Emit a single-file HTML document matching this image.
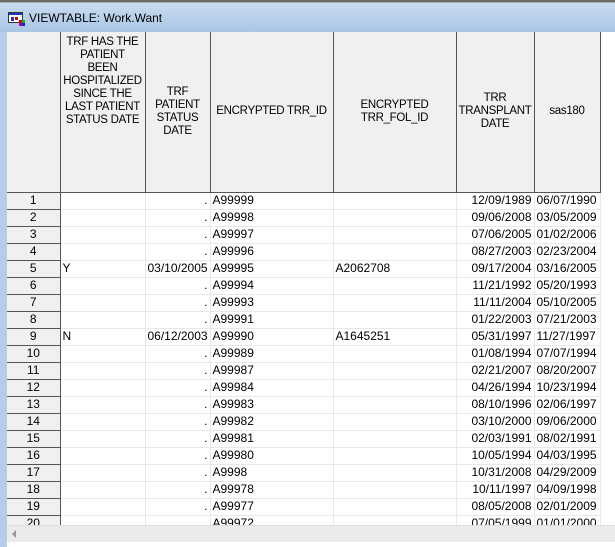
<!DOCTYPE html>
<html><head><meta charset="utf-8"><style>
*{margin:0;padding:0;box-sizing:border-box}
body{width:615px;height:547px;overflow:hidden;background:#fff;font-family:"Liberation Sans",Arial,sans-serif;font-size:12px;color:#000;position:relative}
#top{position:absolute;left:0;top:0;width:615px;height:3px;background:#6b6b6b;border-bottom:1px solid #aaa}
#title{position:absolute;left:0;top:3px;width:615px;height:29px;background:linear-gradient(#c9dbef,#aac6e6)}
#title span{position:absolute;left:29px;top:8px;font-size:12px}
#lb{position:absolute;left:0;top:32px;width:7px;height:515px;background:#b5cde9}
#grid{position:absolute;left:7px;top:32px;width:608px;height:493px;overflow:hidden;background:#fff}
table{border-collapse:collapse;table-layout:fixed;width:593px}
th{background:#f0f0f0;font-weight:normal;border-right:1px solid #555;border-bottom:1px solid #555;height:160px;vertical-align:middle;text-align:center;line-height:13px;padding:0 1px;white-space:nowrap;font-size:11.5px;letter-spacing:-0.3px}
td{height:17px;border-right:1px solid #e8e8e8;border-bottom:1px solid #e8e8e8;padding:0 2px;white-space:nowrap;overflow:hidden;line-height:15px}
td.n{background:#f0f0f0;border-right:1px solid #555;border-bottom:1px solid #555;text-align:center}
td.r{text-align:right}
#sb{position:absolute;left:7px;top:525px;width:608px;height:17px;background:#ebebeb;border-top:1px solid #ddd}
#sb i{position:absolute;left:5px;top:4px;width:0;height:0;border-top:4px solid transparent;border-bottom:4px solid transparent;border-right:4px solid #999}
</style></head><body>
<div id="top"></div>
<div id="title">
<svg viewBox="0 0 18 15" style="position:absolute;left:8px;top:9px;width:18px;height:15px"><rect x="0.5" y="0.5" width="14" height="10" fill="#fff" stroke="#333"/><rect x="1" y="1" width="13" height="2" fill="#1a3fb0"/><rect x="3" y="5" width="3" height="4" fill="#1a3fb0"/><rect x="7" y="5" width="3" height="3" fill="#c00"/><rect x="11" y="8" width="3" height="3" fill="#c00"/><rect x="14" y="8" width="3" height="3" fill="#2a2"/><rect x="11" y="11" width="3" height="3" fill="#a0a"/><rect x="14" y="11" width="3" height="3" fill="#22c"/></svg>
<span>VIEWTABLE: Work.Want</span></div>
<div id="lb"></div>
<div id="grid"><table>
<colgroup><col style="width:53px"><col style="width:85px"><col style="width:65px"><col style="width:123px"><col style="width:123px"><col style="width:78px"><col style="width:66px"></colgroup>
<tr><th></th><th style="vertical-align:top;padding-top:4px">TRF HAS THE<br>PATIENT<br>BEEN<br>HOSPITALIZED<br>SINCE THE<br>LAST PATIENT<br>STATUS DATE</th><th>TRF<br>PATIENT<br>STATUS<br>DATE</th><th>ENCRYPTED TRR_ID</th><th>ENCRYPTED<br>TRR_FOL_ID</th><th>TRR<br>TRANSPLANT<br>DATE</th><th>sas180</th></tr>
<tr><td class="n">1</td><td></td><td class="r">.</td><td>A99999</td><td></td><td class="r">12/09/1989</td><td>06/07/1990</td></tr>
<tr><td class="n">2</td><td></td><td class="r">.</td><td>A99998</td><td></td><td class="r">09/06/2008</td><td>03/05/2009</td></tr>
<tr><td class="n">3</td><td></td><td class="r">.</td><td>A99997</td><td></td><td class="r">07/06/2005</td><td>01/02/2006</td></tr>
<tr><td class="n">4</td><td></td><td class="r">.</td><td>A99996</td><td></td><td class="r">08/27/2003</td><td>02/23/2004</td></tr>
<tr><td class="n">5</td><td>Y</td><td class="r">03/10/2005</td><td>A99995</td><td>A2062708</td><td class="r">09/17/2004</td><td>03/16/2005</td></tr>
<tr><td class="n">6</td><td></td><td class="r">.</td><td>A99994</td><td></td><td class="r">11/21/1992</td><td>05/20/1993</td></tr>
<tr><td class="n">7</td><td></td><td class="r">.</td><td>A99993</td><td></td><td class="r">11/11/2004</td><td>05/10/2005</td></tr>
<tr><td class="n">8</td><td></td><td class="r">.</td><td>A99991</td><td></td><td class="r">01/22/2003</td><td>07/21/2003</td></tr>
<tr><td class="n">9</td><td>N</td><td class="r">06/12/2003</td><td>A99990</td><td>A1645251</td><td class="r">05/31/1997</td><td>11/27/1997</td></tr>
<tr><td class="n">10</td><td></td><td class="r">.</td><td>A99989</td><td></td><td class="r">01/08/1994</td><td>07/07/1994</td></tr>
<tr><td class="n">11</td><td></td><td class="r">.</td><td>A99987</td><td></td><td class="r">02/21/2007</td><td>08/20/2007</td></tr>
<tr><td class="n">12</td><td></td><td class="r">.</td><td>A99984</td><td></td><td class="r">04/26/1994</td><td>10/23/1994</td></tr>
<tr><td class="n">13</td><td></td><td class="r">.</td><td>A99983</td><td></td><td class="r">08/10/1996</td><td>02/06/1997</td></tr>
<tr><td class="n">14</td><td></td><td class="r">.</td><td>A99982</td><td></td><td class="r">03/10/2000</td><td>09/06/2000</td></tr>
<tr><td class="n">15</td><td></td><td class="r">.</td><td>A99981</td><td></td><td class="r">02/03/1991</td><td>08/02/1991</td></tr>
<tr><td class="n">16</td><td></td><td class="r">.</td><td>A99980</td><td></td><td class="r">10/05/1994</td><td>04/03/1995</td></tr>
<tr><td class="n">17</td><td></td><td class="r">.</td><td>A9998</td><td></td><td class="r">10/31/2008</td><td>04/29/2009</td></tr>
<tr><td class="n">18</td><td></td><td class="r">.</td><td>A99978</td><td></td><td class="r">10/11/1997</td><td>04/09/1998</td></tr>
<tr><td class="n">19</td><td></td><td class="r">.</td><td>A99977</td><td></td><td class="r">08/05/2008</td><td>02/01/2009</td></tr>
<tr><td class="n">20</td><td></td><td class="r">.</td><td>A99972</td><td></td><td class="r">07/05/1999</td><td>01/01/2000</td></tr>
</table></div>
<div id="sb"><i></i></div>
</body></html>
